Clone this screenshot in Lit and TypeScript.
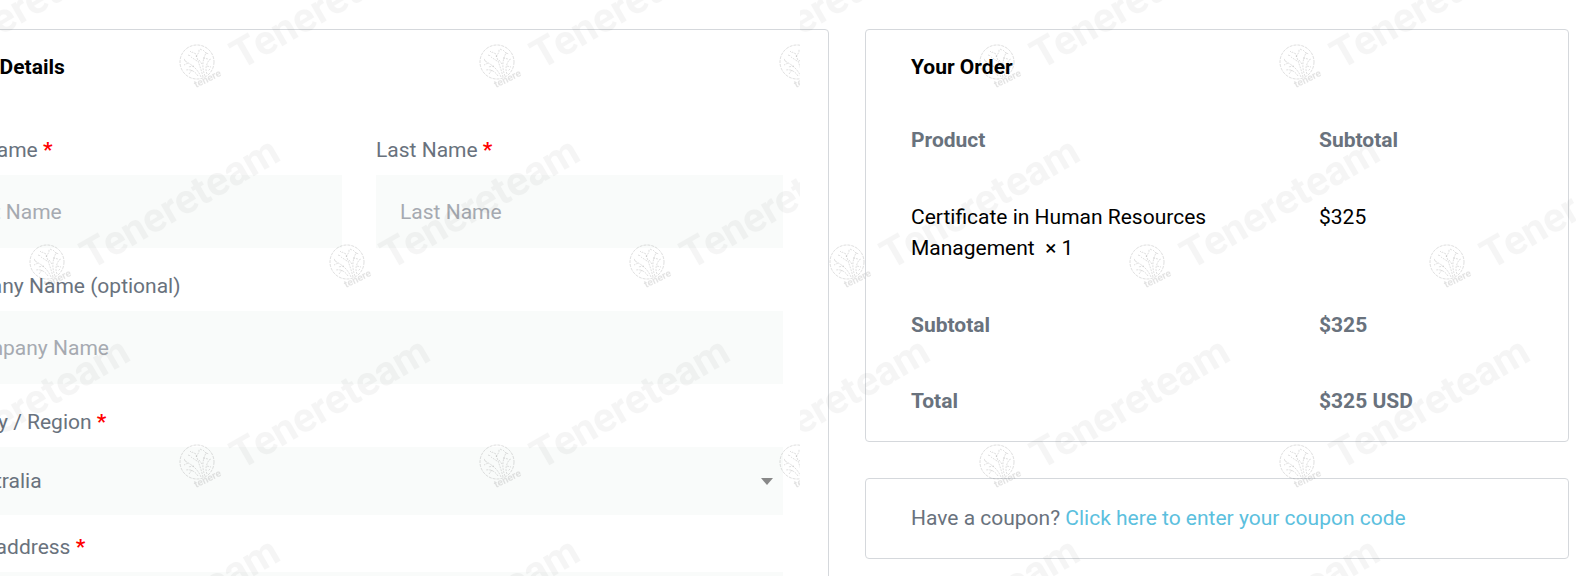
import { LitElement, html, css, svg } from "lit";
import { customElement } from "lit/decorators.js";

const MARKS = [
  [-103, 62], [197, 62], [497, 62], [797, 62],
  [-253, 262], [47, 262], [347, 262], [647, 262],
  [-103, 462], [197, 462], [497, 462], [797, 462],
  [-253, 662], [47, 662], [347, 662], [647, 662],
];

@customElement("watermark-layer")
export class WatermarkLayer extends LitElement {
  static styles = css`
    :host { position: absolute; inset: 0; pointer-events: none; }
    .sheet { display: block; width: 100%; height: 100%; }
    .word { font: 700 41px Roboto, sans-serif; fill: #000; fill-opacity: 0.04; }
    .tiny { font: 700 10px Roboto, sans-serif; fill: #000; fill-opacity: 0.11; }
    .ink { fill: none; stroke: #000; stroke-opacity: 0.12; stroke-width: 1; }
    .ring { stroke-dasharray: 3 1; }
    .twigs { stroke-dasharray: 2 1; }
  `;

  private mark([x, y]: number[]) {
    return svg`<g transform="translate(${x} ${y})">
      <circle class="ink ring" r="17"></circle>
      <path class="ink twigs" d="M4 15 C1 8 -3 4 -12 -1 M-12 -1 l-1 -3 M-9 1 l-4 2 M6 15 C4 6 1 0 -1 -8 M-1 -8 l-4 -2 M-1 -5 l3 -5 v-3 M0 -1 l-6 -4 M8 14 C5 6 5 -1 9 -9 M9 -9 l-3 -3 M9 -9 l3 1 M6 -4 l5 1 M5 2 l-3 -4 M10 12 C8 7 9 3 12 -2 M12 -2 l2 -1 M10 4 l4 1 M1 14 C-2 9 -7 7 -11 8 M-5 8 l-3 4 M-3 4 l-6 1 M-7 -11 l2 2 M-9 -7 l3 1 M3 -13 l2 1 M13 7 l-2 2"></path>
      <text class="tiny" transform="translate(-1 26) rotate(-26)">tenere</text>
      <text class="word" transform="translate(44 8) rotate(-30)">Tenereteam</text>
    </g>`;
  }

  render() {
    return html`<svg class="sheet" aria-hidden="true">
      <defs>
        <pattern id="marks" width="800" height="600" patternUnits="userSpaceOnUse">
          ${MARKS.map((m) => this.mark(m))}
        </pattern>
      </defs>
      <rect width="100%" height="100%" fill="url(#marks)"></rect>
    </svg>`;
  }
}

@customElement("app-root")
export class AppRoot extends LitElement {
  static styles = css`
    * { box-sizing: border-box; }
    :host {
      display: block;
      position: relative;
      overflow: hidden;
      height: 100vh;
      background: #fff;
      color: #69727d;
      font: 400 21px/31px Roboto, sans-serif;
    }
    .checkout {
      display: grid;
      grid-template-columns: 940fr 704fr;
      gap: 36px;
      align-items: start;
      margin-left: -111px;
      padding: 29px 7px 0 0;
    }
    .side { display: grid; gap: 36px; }
    .card { border: 1px solid #d5d8dc; border-radius: 4px; padding: 22px 45px 2px; }
    .title { margin: 0; color: #000; font-size: 21px; line-height: 31px; font-weight: 700; }
    .form { display: grid; grid-template-columns: 1fr 1fr; gap: 23px 34px; margin-top: 52px; padding-bottom: 44px; }
    .field { display: flex; flex-direction: column; gap: 9px; }
    .wide { grid-column: 1 / -1; }
    .pair { display: grid; gap: 17px; }
    .required { color: #f00; font-weight: 700; }
    .input, .select {
      width: 100%;
      border: 0;
      border-radius: 0;
      padding: 0 24px;
      background: #f9fbfa;
      color: #69727d;
      font: inherit;
      outline-offset: -2px;
    }
    .input { height: 73px; }
    .input::placeholder { color: #a6aab1; opacity: 1; }
    .select { height: 68px; appearance: none; }
    .picker { display: grid; align-items: center; }
    .picker > * { grid-area: 1 / 1; }
    .arrow { justify-self: end; margin-right: 10px; width: 12px; height: 7px; fill: #888; pointer-events: none; }
    .order { width: 100%; margin-top: 19px; border-collapse: collapse; table-layout: fixed; text-align: left; }
    .order th, .order td { padding: 23px 0; vertical-align: top; }
    .order .item { width: 66.67%; }
    .order td { color: #000; }
    .order tfoot th, .order tfoot td { padding-bottom: 22px; }
    .order tfoot td { color: #69727d; font-weight: 700; }
    .coupon { padding: 24px 45px; }
    .link { color: #5bc0de; text-decoration: none; }
  `;

  private star = html`<span class="required">*</span>`;

  private text(id: string, label: string, hint: string, required = false, wide = true) {
    return html`<div class="field ${wide ? "wide" : ""}">
      <label for=${id}>${label} ${required ? this.star : ""}</label>
      <input class="input" id=${id} type="text" placeholder=${hint} />
    </div>`;
  }

  render() {
    return html`
      <main class="checkout">
        <section class="card">
          <h3 class="title">Billing Details</h3>
          <form class="form">
            ${this.text("first", "First Name", "First Name", true, false)}
            ${this.text("last", "Last Name", "Last Name", true, false)}
            ${this.text("company", "Company Name (optional)", "Company Name")}
            <div class="pair wide">
              <div class="field">
                <label for="country">Country / Region ${this.star}</label>
                <div class="picker">
                  <select class="select" id="country"><option>Australia</option></select>
                  <svg class="arrow" viewBox="0 0 12 7" aria-hidden="true"><path d="M0 0h12L6 7z"></path></svg>
                </div>
              </div>
              ${this.text("street", "Street address", "House number and street name", true)}
            </div>
          </form>
        </section>
        <div class="side">
          <section class="card">
            <h3 class="title">Your Order</h3>
            <table class="order">
              <thead><tr><th class="item">Product</th><th>Subtotal</th></tr></thead>
              <tbody><tr><td>Certificate in Human Resources Management&nbsp; ×&nbsp;1</td><td>$325</td></tr></tbody>
              <tfoot>
                <tr><th>Subtotal</th><td>$325</td></tr>
                <tr><th>Total</th><td>$325 USD</td></tr>
              </tfoot>
            </table>
          </section>
          <section class="card coupon">
            Have a coupon? <a class="link" href="#coupon">Click here to enter your coupon code</a>
          </section>
        </div>
      </main>
      <watermark-layer></watermark-layer>
    `;
  }
}
